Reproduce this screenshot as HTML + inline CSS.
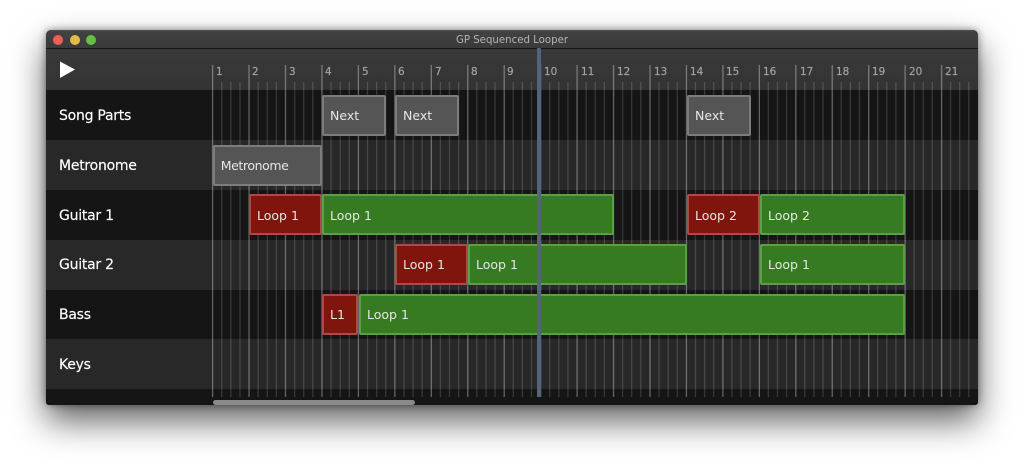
<!DOCTYPE html>
<html><head><meta charset="utf-8">
<style>
html,body{margin:0;padding:0;width:1024px;height:467px;overflow:hidden;background:#fff}
body{font-family:"DejaVu Sans",sans-serif;position:relative}
#win{position:absolute;left:46px;top:30px;width:932px;height:375px;border-radius:5px 5px 3px 3px;overflow:hidden;background:#151515;}
#shadow{position:absolute;left:46px;top:30px;width:932px;height:375px;border-radius:5px;box-shadow:0 16px 34px rgba(0,0,0,.62),0 0 8px rgba(0,0,0,.45)}
.abs{position:absolute}
#title{left:0;top:0;width:932px;height:18px;background:linear-gradient(#505050 0,#414141 2px,#3a3a3a 100%);border-bottom:1px solid #161616;text-align:center;color:#b4b4b4;font-size:10.2px;line-height:21px;font-family:"DejaVu Sans",sans-serif}
.dot{position:absolute;top:5px;width:10px;height:10px;border-radius:50%}
#head{left:0;top:19px;width:932px;height:41px;background:linear-gradient(#393939,#333)}
.row{position:absolute;left:0;width:932px}
.d{background:#151515}.l{background:#282828}
.lab{position:absolute;left:59px;color:#fff;font-size:14px;line-height:18px;white-space:nowrap;letter-spacing:-.25px;-webkit-text-stroke:.15px #fff}
.num{position:absolute;top:66px;color:#a2a2a2;font-size:10.4px;line-height:12px;-webkit-text-stroke:.2px #a2a2a2}
.clip{position:absolute;box-sizing:border-box;border:2px solid;border-radius:2px;color:#e6e6e6;font-size:12.5px;line-height:37px;padding-left:6px;white-space:nowrap;overflow:hidden}
.g{background:#367b22;border-color:#5aa046}
.r{background:#80150e;border-color:#a84c48}
.n{background:#555;border-color:#7c7c7c}
#all{position:absolute;left:0;top:0;width:1024px;height:467px;filter:blur(.35px)}
</style></head>
<body>
<div id="shadow"></div>
<div id="all">
<div id="win">
  <div class="abs" id="title">GP Sequenced Looper
    <div class="dot" style="left:7px;background:#ee5f55"></div>
    <div class="dot" style="left:24px;background:#e2bd45"></div>
    <div class="dot" style="left:40px;background:#62c044"></div>
  </div>
  <div class="abs" id="head"></div>
  <div class="row d" style="top:60px;height:50px"></div>
  <div class="row l" style="top:110px;height:50px"></div>
  <div class="row d" style="top:160px;height:49.5px"></div>
  <div class="row l" style="top:209.5px;height:50px"></div>
  <div class="row d" style="top:259.5px;height:49.5px"></div>
  <div class="row l" style="top:309px;height:50px"></div>
  <div class="row d" style="top:359px;height:16px"></div>
</div>
<svg class="abs" style="left:0;top:0" width="1024" height="467" viewBox="0 0 1024 467">
  <g fill="none">
    <line x1="221.1" y1="239.5" x2="972" y2="239.5" stroke="#fff" stroke-opacity=".15" stroke-width="315" stroke-dasharray="1.3 7.81 1.3 7.81 1.3 16.92"/>
    <line x1="211.95" y1="231" x2="972" y2="231" stroke="#fff" stroke-opacity=".34" stroke-width="332" stroke-dasharray="1.3 35.15"/>
  </g>
  <path d="M60 61.5 L75 69.5 L60 78 Z" fill="#fff"/>
</svg>
<div class="abs" style="left:0;top:0;width:1024px;height:467px">
  <div class="lab" style="top:107px">Song Parts</div>
  <div class="lab" style="top:157px">Metronome</div>
  <div class="lab" style="top:207px">Guitar 1</div>
  <div class="lab" style="top:256px">Guitar 2</div>
  <div class="lab" style="top:306px">Bass</div>
  <div class="lab" style="top:356px">Keys</div>

  <div class="num" style="left:216px">1</div>
  <div class="num" style="left:252px">2</div>
  <div class="num" style="left:289px">3</div>
  <div class="num" style="left:325px">4</div>
  <div class="num" style="left:362px">5</div>
  <div class="num" style="left:398px">6</div>
  <div class="num" style="left:435px">7</div>
  <div class="num" style="left:471px">8</div>
  <div class="num" style="left:507px">9</div>
  <div class="num" style="left:544px">10</div>
  <div class="num" style="left:581px">11</div>
  <div class="num" style="left:617px">12</div>
  <div class="num" style="left:654px">13</div>
  <div class="num" style="left:690px">14</div>
  <div class="num" style="left:726px">15</div>
  <div class="num" style="left:763px">16</div>
  <div class="num" style="left:800px">17</div>
  <div class="num" style="left:836px">18</div>
  <div class="num" style="left:872px">19</div>
  <div class="num" style="left:909px">20</div>
  <div class="num" style="left:945px">21</div>

  <div class="clip n" style="left:322px;top:95px;width:64px;height:40.5px">Next</div>
  <div class="clip n" style="left:395px;top:95px;width:64px;height:40.5px">Next</div>
  <div class="clip n" style="left:687px;top:95px;width:64px;height:40.5px">Next</div>
  <div class="clip n" style="left:212.7px;top:145px;width:109px;height:40.5px;letter-spacing:-.4px">Metronome</div>

  <div class="clip r" style="left:249px;top:194px;width:73px;height:41px;line-height:39px">Loop 1</div>
  <div class="clip g" style="left:322px;top:194px;width:291.5px;height:41px;line-height:39px">Loop 1</div>
  <div class="clip r" style="left:687px;top:194px;width:73px;height:41px;line-height:39px">Loop 2</div>
  <div class="clip g" style="left:760px;top:194px;width:145px;height:41px;line-height:39px">Loop 2</div>

  <div class="clip r" style="left:395px;top:244px;width:73px;height:41px">Loop 1</div>
  <div class="clip g" style="left:468px;top:244px;width:219px;height:41px">Loop 1</div>
  <div class="clip g" style="left:760px;top:244px;width:145px;height:41px">Loop 1</div>

  <div class="clip r" style="left:322px;top:294px;width:36px;height:41px">L1</div>
  <div class="clip g" style="left:359px;top:294px;width:546px;height:41px">Loop 1</div>

  <div class="abs" style="left:537px;top:48px;width:4px;height:349px;background:#55647c"></div>
  <div class="abs" style="left:213px;top:400px;width:202px;height:5px;border-radius:3px;background:#8a8a8a"></div>
</div>
</div>
</body></html>
